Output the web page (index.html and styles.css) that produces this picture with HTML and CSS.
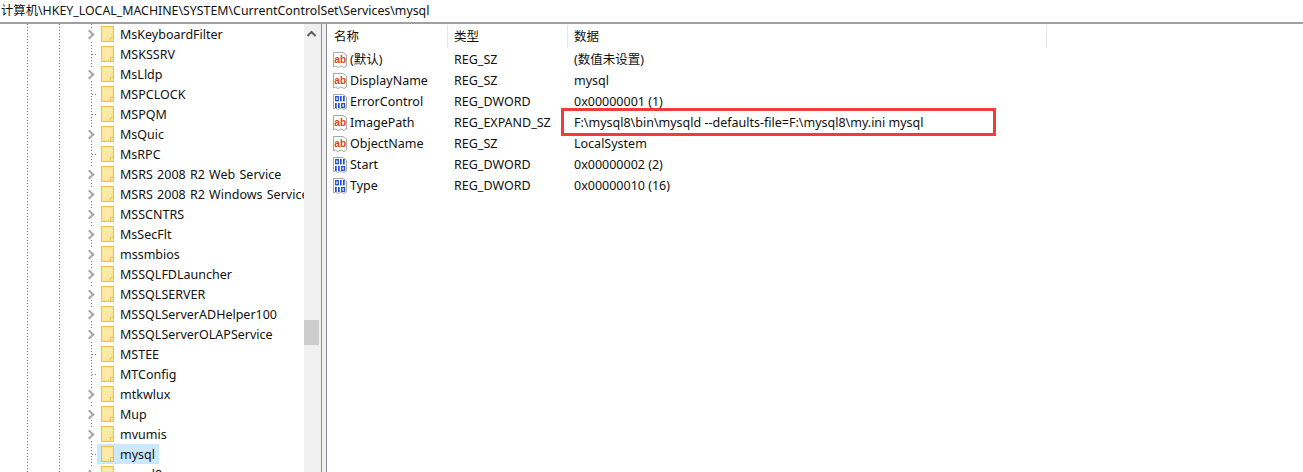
FILE: index.html
```html
<!DOCTYPE html>
<html lang="zh-CN">
<head>
  <meta charset="UTF-8">
  <meta name="viewport" content="width=device-width, initial-scale=1.0">
  <title>注册表编辑器</title>
  <link rel="stylesheet" href="styles.css">
</head>
<body>
  <svg class="sprites" xmlns="http://www.w3.org/2000/svg">
    <symbol id="folder" viewBox="0 0 13 16">
      <rect x="0.5" y="0.5" width="12" height="15" fill="#fde28f" stroke="#ecc04a"/>
      <rect x="2" y="2" width="9" height="12" fill="#fee9a6"/>
      <path d="M9.5 15.5V11.5H12.5" fill="#fff6d2" stroke="#ecc04a"/>
    </symbol>
    <symbol id="paper" viewBox="0 0 16 16">
      <path d="M1.5 0.5H11L14.5 3V14L12 15.5L9 14L6 15.5L3.5 14L1.5 15Z" fill="#fff" stroke="#a8a8a8"/>
    </symbol>
    <symbol id="reg-dword" viewBox="0 0 16 16">
      <use href="#paper"/>
      <rect x="3.7" y="2.7" width="2.6" height="4" fill="none" stroke="#1f4fd0" stroke-width="1.3"/>
      <rect x="8" y="2" width="1.7" height="5.4" fill="#1f4fd0"/>
      <rect x="11" y="2" width="1.7" height="5.4" fill="#1f4fd0"/>
      <rect x="3" y="9" width="1.7" height="5" fill="#1f4fd0"/>
      <rect x="6" y="9" width="1.7" height="5" fill="#1f4fd0"/>
      <rect x="9.7" y="9.7" width="2.8" height="3.6" fill="none" stroke="#1f4fd0" stroke-width="1.3"/>
    </symbol>
  </svg>

  <div class="address">计算机\HKEY_LOCAL_MACHINE\SYSTEM\CurrentControlSet\Services\mysql</div>

  <div class="main">
    <div class="tree">
      <div class="tree-rows">
        <div class="node"><span class="toggle arrow"></span><span class="item"><svg class="folder"><use href="#folder"/></svg>MsKeyboardFilter</span></div>
        <div class="node"><span class="toggle leaf"></span><span class="item"><svg class="folder"><use href="#folder"/></svg>MSKSSRV</span></div>
        <div class="node"><span class="toggle arrow"></span><span class="item"><svg class="folder"><use href="#folder"/></svg>MsLldp</span></div>
        <div class="node"><span class="toggle leaf"></span><span class="item"><svg class="folder"><use href="#folder"/></svg>MSPCLOCK</span></div>
        <div class="node"><span class="toggle leaf"></span><span class="item"><svg class="folder"><use href="#folder"/></svg>MSPQM</span></div>
        <div class="node"><span class="toggle arrow"></span><span class="item"><svg class="folder"><use href="#folder"/></svg>MsQuic</span></div>
        <div class="node"><span class="toggle leaf"></span><span class="item"><svg class="folder"><use href="#folder"/></svg>MsRPC</span></div>
        <div class="node"><span class="toggle arrow"></span><span class="item"><svg class="folder"><use href="#folder"/></svg>MSRS 2008 R2 Web Service</span></div>
        <div class="node"><span class="toggle arrow"></span><span class="item"><svg class="folder"><use href="#folder"/></svg>MSRS 2008 R2 Windows Service</span></div>
        <div class="node"><span class="toggle arrow"></span><span class="item"><svg class="folder"><use href="#folder"/></svg>MSSCNTRS</span></div>
        <div class="node"><span class="toggle arrow"></span><span class="item"><svg class="folder"><use href="#folder"/></svg>MsSecFlt</span></div>
        <div class="node"><span class="toggle arrow"></span><span class="item"><svg class="folder"><use href="#folder"/></svg>mssmbios</span></div>
        <div class="node"><span class="toggle arrow"></span><span class="item"><svg class="folder"><use href="#folder"/></svg>MSSQLFDLauncher</span></div>
        <div class="node"><span class="toggle arrow"></span><span class="item"><svg class="folder"><use href="#folder"/></svg>MSSQLSERVER</span></div>
        <div class="node"><span class="toggle arrow"></span><span class="item"><svg class="folder"><use href="#folder"/></svg>MSSQLServerADHelper100</span></div>
        <div class="node"><span class="toggle arrow"></span><span class="item"><svg class="folder"><use href="#folder"/></svg>MSSQLServerOLAPService</span></div>
        <div class="node"><span class="toggle leaf"></span><span class="item"><svg class="folder"><use href="#folder"/></svg>MSTEE</span></div>
        <div class="node"><span class="toggle leaf"></span><span class="item"><svg class="folder"><use href="#folder"/></svg>MTConfig</span></div>
        <div class="node"><span class="toggle arrow"></span><span class="item"><svg class="folder"><use href="#folder"/></svg>mtkwlux</span></div>
        <div class="node"><span class="toggle arrow"></span><span class="item"><svg class="folder"><use href="#folder"/></svg>Mup</span></div>
        <div class="node"><span class="toggle arrow"></span><span class="item"><svg class="folder"><use href="#folder"/></svg>mvumis</span></div>
        <div class="node"><span class="toggle leaf"></span><span class="item selected"><svg class="folder"><use href="#folder"/></svg>mysql</span></div>
        <div class="node"><span class="toggle arrow"></span><span class="item"><svg class="folder"><use href="#folder"/></svg>mysql8</span></div>
      </div>
    </div>

    <div class="scrollbar">
      <svg class="scroll-up" viewBox="0 0 15 20"><path d="M3.5 12L7.5 8L11.5 12" fill="none" stroke="#606060" stroke-width="2"/></svg>
      <div class="scroll-thumb"></div>
    </div>

    <div class="splitter"></div>

    <div class="values">
      <div class="values-head">
        <div class="col-head">名称</div>
        <div class="col-head">类型</div>
        <div class="col-head">数据</div>
      </div>
      <div class="value-row">
        <div class="val-name"><svg class="val-icon" viewBox="0 0 16 16"><use href="#paper"/><text x="8.2" y="10.5" class="icon-ab">ab</text></svg>(默认)</div>
        <div class="val-type">REG_SZ</div>
        <div class="val-data">(数值未设置)</div>
      </div>
      <div class="value-row">
        <div class="val-name"><svg class="val-icon" viewBox="0 0 16 16"><use href="#paper"/><text x="8.2" y="10.5" class="icon-ab">ab</text></svg>DisplayName</div>
        <div class="val-type">REG_SZ</div>
        <div class="val-data">mysql</div>
      </div>
      <div class="value-row">
        <div class="val-name"><svg class="val-icon"><use href="#reg-dword"/></svg>ErrorControl</div>
        <div class="val-type">REG_DWORD</div>
        <div class="val-data">0x00000001 (1)</div>
      </div>
      <div class="value-row">
        <div class="val-name"><svg class="val-icon" viewBox="0 0 16 16"><use href="#paper"/><text x="8.2" y="10.5" class="icon-ab">ab</text></svg>ImagePath</div>
        <div class="val-type">REG_EXPAND_SZ</div>
        <div class="val-data highlighted">F:\mysql8\bin\mysqld --defaults-file=F:\mysql8\my.ini mysql<span class="red-box"></span></div>
      </div>
      <div class="value-row">
        <div class="val-name"><svg class="val-icon" viewBox="0 0 16 16"><use href="#paper"/><text x="8.2" y="10.5" class="icon-ab">ab</text></svg>ObjectName</div>
        <div class="val-type">REG_SZ</div>
        <div class="val-data">LocalSystem</div>
      </div>
      <div class="value-row">
        <div class="val-name"><svg class="val-icon"><use href="#reg-dword"/></svg>Start</div>
        <div class="val-type">REG_DWORD</div>
        <div class="val-data">0x00000002 (2)</div>
      </div>
      <div class="value-row">
        <div class="val-name"><svg class="val-icon"><use href="#reg-dword"/></svg>Type</div>
        <div class="val-type">REG_DWORD</div>
        <div class="val-data">0x00000010 (16)</div>
      </div>
    </div>
  </div>
</body>
</html>
```

FILE: styles.css
```css
html, body {
  height: 100%;
}
body {
  margin: 0;
  height: 472px;
  overflow: hidden;
  display: flex;
  flex-direction: column;
  background: #fff;
  color: #111;
  font-family: "Noto Sans", "Noto Sans CJK SC", sans-serif;
  font-size: 12.5px;
}
.sprites {
  width: 0;
  height: 0;
  display: block;
}
.icon-ab {
  font: bold 10px "Liberation Sans", sans-serif;
  fill: #d8431f;
  text-anchor: middle;
}
.address {
  height: 22px;
  line-height: 22px;
  padding-left: 1px;
  font-size: 12.35px;
  white-space: nowrap;
  border-bottom: 2px solid #a0a0a0;
}
.main {
  flex: 1;
  display: flex;
  min-height: 0;
}

/* left tree */
.tree {
  width: 304px;
  overflow: hidden;
  word-spacing: 1px;
  background-image:
    repeating-linear-gradient(to bottom, #808080 0 1px, transparent 1px 3px),
    repeating-linear-gradient(to bottom, #808080 0 1px, transparent 1px 3px),
    repeating-linear-gradient(to bottom, #808080 0 1px, transparent 1px 3px);
  background-size: 1px 100%;
  background-position: 27px 0, 59px 0, 91px 0;
  background-repeat: no-repeat;
}
.node {
  height: 20px;
  display: flex;
  align-items: center;
  padding-left: 84px;
  white-space: nowrap;
}
.toggle {
  width: 13px;
  height: 20px;
  flex: none;
  position: relative;
}
.toggle.arrow::before {
  content: "";
  position: absolute;
  left: 3px;
  top: 4px;
  width: 10px;
  height: 12px;
  background: #fff;
}
.toggle.arrow::after {
  content: "";
  position: absolute;
  left: 2px;
  top: 7px;
  width: 5px;
  height: 5px;
  border-top: 2px solid #a6a6a6;
  border-right: 2px solid #a6a6a6;
  transform: rotate(45deg);
}
.toggle.leaf {
  background: repeating-linear-gradient(to right, #808080 0 1px, transparent 1px 3px) 8px 10px / 5px 1px no-repeat;
}
.item {
  height: 20px;
  display: flex;
  align-items: center;
  padding: 0 4px;
}
.item.selected {
  background: #cce8ff;
}
.folder {
  width: 13px;
  height: 16px;
  margin-right: 6px;
  flex: none;
}

.scrollbar {
  width: 17px;
  flex: none;
  background: #f0f0f0;
  display: flex;
  flex-direction: column;
}
.scroll-up {
  width: 15px;
  height: 20px;
  flex: none;
}
.scroll-thumb {
  width: 15px;
  height: 25px;
  margin-top: 276px;
  background: #cdcdcd;
}
.splitter {
  width: 4px;
  flex: none;
  background: #f0f0f0;
  border-left: 1px solid #8d8d95;
  border-right: 1px solid #8d8d95;
}

/* right value list */
.values {
  flex: 1;
}
.values-head {
  display: grid;
  grid-template-columns: 121px 120px 479px;
  height: 25px;
}
.col-head {
  height: 23px;
  margin-top: 1px;
  padding-left: 6px;
  line-height: 23px;
  border-right: 1px solid #e5e5e5;
}
.col-head:first-child {
  padding-left: 7px;
}
.value-row {
  display: grid;
  grid-template-columns: 120px 120px 480px;
  height: 21px;
  line-height: 21px;
  white-space: nowrap;
}
.val-name {
  display: flex;
  align-items: center;
  padding-left: 5px;
}
.val-icon {
  width: 16px;
  height: 16px;
  margin-right: 2px;
  flex: none;
}
.val-type, .val-data {
  padding-left: 7px;
}
.highlighted {
  position: relative;
}
.red-box {
  position: absolute;
  left: -6px;
  top: -4px;
  width: 435px;
  height: 28px;
  box-sizing: border-box;
  border: 3px solid #f23c3c;
}
```
